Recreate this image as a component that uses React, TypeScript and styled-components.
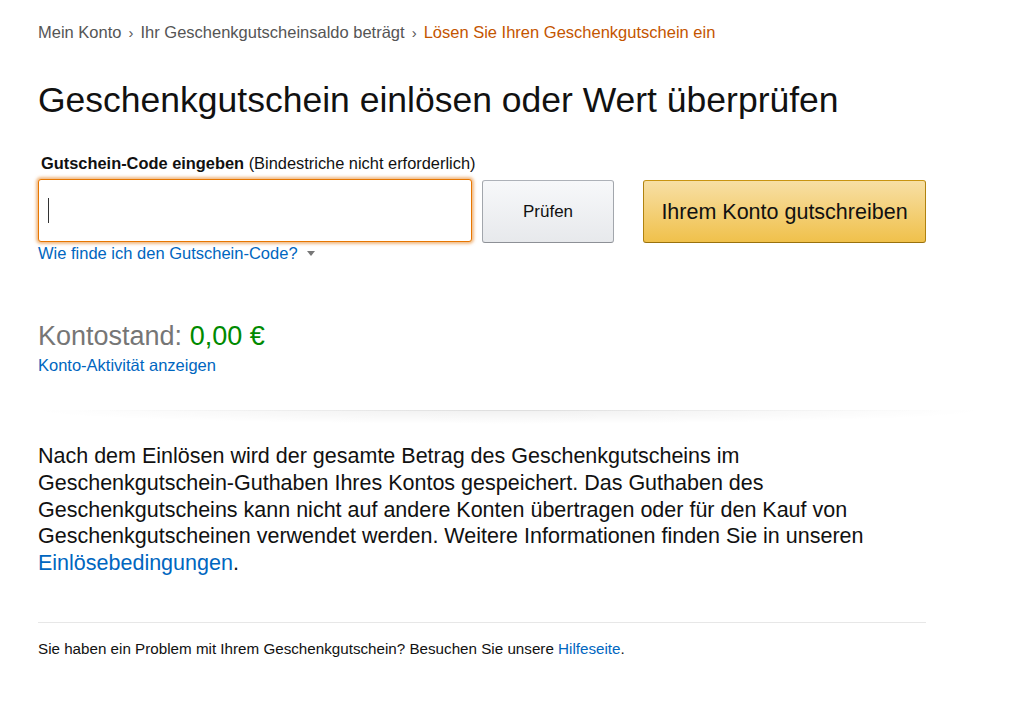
import styled, { createGlobalStyle } from "styled-components";

const GlobalStyle = createGlobalStyle`
  body {
    margin: 0;
    background: #fff;
    font-family: "Liberation Sans", Arial, sans-serif;
    color: #111;
  }
`;

const Page = styled.div`
  padding: 22px 0 40px 38px;
  width: 888px;
`;

const Crumbs = styled.nav`
  display: flex;
  align-items: center;
  gap: 7px;
  font-size: 16.5px;
  color: #555;
  height: 20px;
`;

const Crumb = styled.span<{ $active?: boolean }>`
  color: ${(p) => (p.$active ? "#c45500" : "#555")};
`;

const Sep = styled.span`
  color: #555;
  font-size: 15px;
`;

const Title = styled.h1`
  margin: 38px 0 0;
  font-size: 35.5px;
  font-weight: 400;
  line-height: 40px;
  color: #111;
`;

const Label = styled.div`
  margin-top: 34px;
  padding-left: 3px;
  font-size: 16.4px;
  line-height: 19px;
  color: #111;
  b {
    font-weight: 700;
  }
`;

const FormRow = styled.div`
  display: flex;
  align-items: flex-start;
  margin-top: 6px;
`;

const CodeField = styled.div`
  display: flex;
  flex-direction: column;
`;

const InputWrap = styled.div`
  position: relative;
`;

const CodeInput = styled.input`
  box-sizing: border-box;
  width: 434px;
  height: 63px;
  border: 1px solid #e77600;
  border-radius: 3px;
  box-shadow: 0 0 3px 2px rgba(228, 121, 17, 0.5);
  outline: none;
  padding: 0 10px;
  font-size: 18px;
  font-family: inherit;
  caret-color: #111;
`;

const Caret = styled.span`
  position: absolute;
  left: 10px;
  top: 19px;
  width: 1px;
  height: 25px;
  background: #333;
`;

const HelpLink = styled.a`
  display: flex;
  align-items: center;
  gap: 9px;
  margin-top: 1px;
  font-size: 16.5px;
  line-height: 20px;
  color: #0066c0;
  text-decoration: none;
`;

const Triangle = styled.span`
  width: 0;
  height: 0;
  border-left: 4px solid transparent;
  border-right: 4px solid transparent;
  border-top: 5px solid #777;
  margin-top: 1px;
`;

const CheckButton = styled.button`
  box-sizing: border-box;
  margin-left: 10px;
  margin-top: 1px;
  width: 132px;
  height: 63px;
  padding-top: 2px;
  border: 1px solid #adb1b8;
  border-color: #adb1b8 #a2a6ac #8d9096;
  border-radius: 3px;
  background: linear-gradient(to bottom, #f7f8fa, #e7e9ec);
  font-family: inherit;
  font-size: 17px;
  color: #111;
`;

const CreditButton = styled.button`
  box-sizing: border-box;
  margin-left: 29px;
  margin-top: 1px;
  width: 283px;
  height: 63px;
  padding-top: 2px;
  border: 1px solid #a88734;
  border-color: #c89411 #b0820f #99710d;
  border-radius: 3px;
  background: linear-gradient(to bottom, #f7dfa5, #f0c14b);
  font-family: inherit;
  font-size: 21.5px;
  color: #111;
`;

const Balance = styled.div`
  margin-top: 58px;
  font-size: 27px;
  line-height: 30px;
  color: #767676;
`;

const Amount = styled.span`
  color: #008a00;
`;

const ActivityLink = styled.a`
  display: block;
  margin-top: 4px;
  font-size: 16.5px;
  line-height: 20px;
  color: #0066c0;
  text-decoration: none;
`;

const ShadowDivider = styled.div`
  position: relative;
  margin: 35px 0 0 -10px;
  width: 962px;
  height: 14px;
  background: radial-gradient(
    ellipse 50% 100% at 50% 0%,
    rgba(0, 0, 0, 0.06),
    rgba(0, 0, 0, 0) 100%
  );
  &::before {
    content: "";
    position: absolute;
    left: 5%;
    right: 5%;
    top: 0;
    height: 1px;
    background: linear-gradient(
      to right,
      rgba(0, 0, 0, 0),
      rgba(0, 0, 0, 0.08) 50%,
      rgba(0, 0, 0, 0)
    );
  }
`;

const Info = styled.p`
  margin: 19px 0 0;
  font-size: 21.5px;
  line-height: 26.75px;
  color: #111;
`;

const Link = styled.a`
  color: #0066c0;
  text-decoration: none;
`;

const Rule = styled.hr`
  margin: 45px 0 0;
  border: 0;
  border-top: 1px solid #e7e7e7;
`;

const Footer = styled.p`
  margin: 16px 0 0;
  font-size: 15.2px;
  line-height: 20px;
  color: #111;
`;

export default function App() {
  return (
    <>
      <GlobalStyle />
      <Page>
        <Crumbs>
          <Crumb>Mein Konto</Crumb>
          <Sep>›</Sep>
          <Crumb>Ihr Geschenkgutscheinsaldo beträgt</Crumb>
          <Sep>›</Sep>
          <Crumb $active>Lösen Sie Ihren Geschenkgutschein ein</Crumb>
        </Crumbs>
        <Title>Geschenkgutschein einlösen oder Wert überprüfen</Title>
        <Label>
          <b>Gutschein-Code eingeben</b> (Bindestriche nicht erforderlich)
        </Label>
        <FormRow>
          <CodeField>
            <InputWrap>
              <CodeInput type="text" aria-label="Gutschein-Code" />
              <Caret />
            </InputWrap>
            <HelpLink href="#">
              Wie finde ich den Gutschein-Code? <Triangle />
            </HelpLink>
          </CodeField>
          <CheckButton>Prüfen</CheckButton>
          <CreditButton>Ihrem Konto gutschreiben</CreditButton>
        </FormRow>
        <Balance>
          Kontostand: <Amount>0,00 €</Amount>
        </Balance>
        <ActivityLink href="#">Konto-Aktivität anzeigen</ActivityLink>
        <ShadowDivider />
        <Info>
          Nach dem Einlösen wird der gesamte Betrag des Geschenkgutscheins im
          Geschenkgutschein-Guthaben Ihres Kontos gespeichert. Das Guthaben des
          Geschenkgutscheins kann nicht auf andere Konten übertragen oder für
          den Kauf von Geschenkgutscheinen verwendet werden. Weitere
          Informationen finden Sie in unseren{" "}
          <Link href="#">Einlösebedingungen</Link>.
        </Info>
        <Rule />
        <Footer>
          Sie haben ein Problem mit Ihrem Geschenkgutschein? Besuchen Sie unsere{" "}
          <Link href="#">Hilfeseite</Link>.
        </Footer>
      </Page>
    </>
  );
}
